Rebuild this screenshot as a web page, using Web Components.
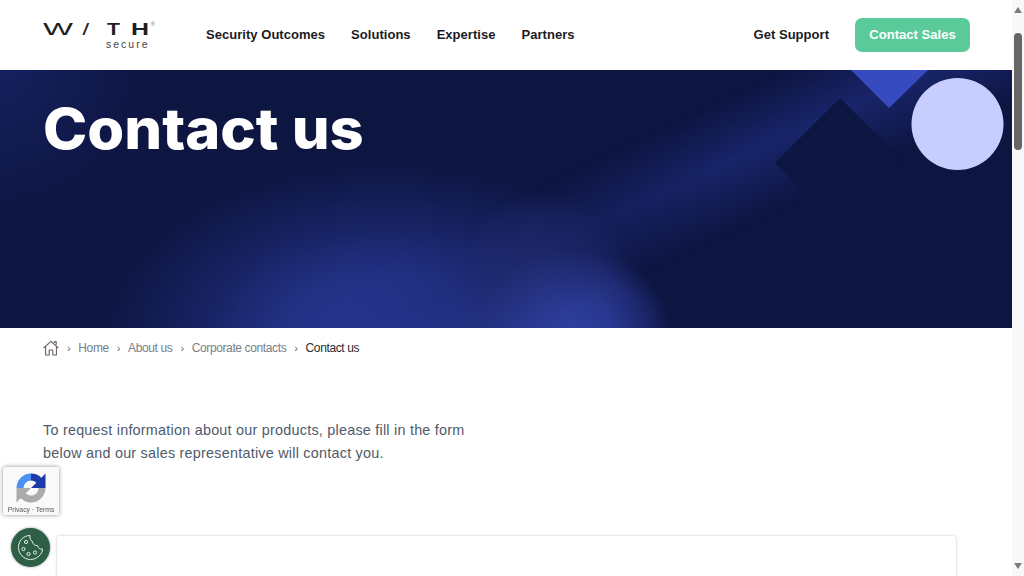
<!DOCTYPE html>
<html>
<head>
<meta charset="utf-8">
<style>
html,body{margin:0;height:100%;overflow:hidden;background:#fff}
body{font-family:"Liberation Sans",Arial,sans-serif}
.page{display:grid;grid-template-columns:1012px 12px;height:576px}
.main{height:576px;overflow:hidden}
</style>
</head>
<body>
<div class="page">
  <div class="main">
    <site-header></site-header>
    <hero-banner>Contact us</hero-banner>
    <bread-crumbs></bread-crumbs>
    <intro-text>To request information about our products, please fill in the form below and our sales representative will contact you.</intro-text>
    <form-card></form-card>
  </div>
  <fake-scrollbar></fake-scrollbar>
</div>
<recaptcha-badge></recaptcha-badge>
<cookie-button></cookie-button>

<script>
class SiteHeader extends HTMLElement {
    constructor() {
        super()
        const shadow = this.attachShadow({ mode: 'open' })
        shadow.innerHTML = `
        <style>
        :host{display:flex;align-items:center;height:70px;box-sizing:border-box;padding:0 42px 0 43px;background:#fff;
            font-family:"Liberation Sans",Arial,sans-serif;box-shadow:0 1px 2px rgba(0,0,0,.15);position:relative}
        .logo{width:113px;height:32px;flex:none;display:block;margin-top:-1px}
        nav{display:flex;gap:26px;margin-left:50px}
        a{font-size:13px;line-height:15px;padding-bottom:2px;font-weight:700;color:#1b1b1f;white-space:nowrap;letter-spacing:.035px}
        .right{margin-left:auto;display:flex;align-items:center;gap:26px}
        .cta{display:flex;align-items:center;justify-content:center;box-sizing:border-box;width:115px;height:34px;border-radius:7px;background:#5bca9b;color:#fff;letter-spacing:.03px}
        </style>
        <svg class="logo" viewBox="0 0 113 32" fill="#1e1e22" font-family="Liberation Sans">
          <text x="0" y="16" font-size="17" textLength="30" lengthAdjust="spacingAndGlyphs">W</text>
          <text x="40" y="16" font-size="17" font-weight="700" font-style="italic">/</text>
          <text x="64" y="16" font-size="17" font-weight="700" textLength="13" lengthAdjust="spacingAndGlyphs">T</text>
          <text x="88" y="16" font-size="17" font-weight="700" textLength="18" lengthAdjust="spacingAndGlyphs">H</text>
          <text x="108" y="7" font-size="5" fill="#666">®</text>
          <text x="63" y="29" font-size="10.5" fill="#444" letter-spacing="2">secure</text>
        </svg>
        <nav><a>Security Outcomes</a><a>Solutions</a><a>Expertise</a><a>Partners</a></nav>
        <div class="right"><a>Get Support</a><a class="cta">Contact Sales</a></div>
        `
    }
}
window.customElements.define('site-header', SiteHeader)

class HeroBanner extends HTMLElement {
    constructor() {
        super()
        const shadow = this.attachShadow({ mode: 'open' })
        shadow.innerHTML = `
        <style>
        :host{display:block;position:relative;height:258px;overflow:hidden;
            background:
              radial-gradient(ellipse 100px 85px at 572px 264px,#2e3f9f 0,rgba(43,59,152,.85) 40%,rgba(42,56,148,.45) 75%,rgba(36,50,130,0) 100%),
              radial-gradient(ellipse 90px 105px at 545px 225px,rgba(46,54,118,.75) 0,rgba(42,50,116,.4) 55%,rgba(38,48,116,0) 100%),
              radial-gradient(ellipse 285px 175px at 385px 266px,#263590 0,#233185 35%,rgba(28,40,112,.7) 65%,rgba(18,28,80,0) 100%),
              radial-gradient(circle 150px at 0 0,#15215e 0,rgba(13,21,65,0) 100%),
              #0d1541}
        .band{position:absolute;inset:0;
            background:linear-gradient(155.3deg,rgba(25,37,100,0) 50%,#19256a 59%,rgba(25,37,100,0) 69%);
            -webkit-mask-image:linear-gradient(90deg,transparent 35%,#000 72%);mask-image:linear-gradient(90deg,transparent 35%,#000 72%)}
        .shapes{position:absolute;inset:0;display:block}
        h1{position:relative;margin:0;padding:24px 0 0 43px;font:800 56px/70px Inter,"Liberation Sans",sans-serif;color:#fff;transform:scaleX(1.065);transform-origin:43px 0}
        </style>
        <div class="band"></div>
        <svg class="shapes" viewBox="0 0 1012 258">
          <polygon points="775,93 840,28 905,93 840,158" fill="#0d1541"/>
          <polygon points="851,0 928,0 889,38" fill="#364bc0"/>
          <circle cx="957.5" cy="54" r="46" fill="#c7cdff"/>
        </svg>
        <h1><slot></slot></h1>
        `
    }
}
window.customElements.define('hero-banner', HeroBanner)

class BreadCrumbs extends HTMLElement {
    constructor() {
        super()
        const shadow = this.attachShadow({ mode: 'open' })
        shadow.innerHTML = `
        <style>
        :host{display:flex;align-items:center;box-sizing:border-box;height:38px;padding:1px 43px 0;font:12px "Liberation Sans",Arial,sans-serif;color:#7a7d88;letter-spacing:-.38px}
        svg{width:16px;height:16px;margin-right:8px;flex:none}
        i{font-style:normal;font-size:11px;margin:0 8px;color:#666}
        i.first{margin-left:0}
        b{font-weight:400;color:#2a2b33}
        </style>
        <svg viewBox="0 0 16 16" fill="none" stroke="#6b5f60" stroke-width="1.1" stroke-linejoin="round">
          <path d="M.6 8 8 1.4 15.4 8M2.6 6.6V15H6.2V10H9.8V15H13.4V6.6M11.4 3V1.6H13.2V4.8"/>
        </svg>
        <i class="first">›</i><span>Home</span><i>›</i><span>About us</span><i>›</i><span>Corporate contacts</span><i>›</i><b>Contact us</b>
        `
    }
}
window.customElements.define('bread-crumbs', BreadCrumbs)

class IntroText extends HTMLElement {
    constructor() {
        super()
        const shadow = this.attachShadow({ mode: 'open' })
        shadow.innerHTML = `
        <style>
        :host{display:block;width:440px;margin:53px 0 0 43px;font:14.4px/23px "Liberation Sans",Arial,sans-serif;color:#4f5a6b;letter-spacing:.23px}
        </style>
        <slot></slot>
        `
    }
}
window.customElements.define('intro-text', IntroText)

class FormCard extends HTMLElement {
    constructor() {
        super()
        const shadow = this.attachShadow({ mode: 'open' })
        shadow.innerHTML = `
        <style>
        :host{display:block;box-sizing:border-box;width:901px;height:200px;margin:70px 0 0 56px;background:#fff;border-radius:4px;border:1px solid #e9e9e9;box-shadow:0 0 3px rgba(0,0,0,.08)}
        </style>
        `
    }
}
window.customElements.define('form-card', FormCard)

class FakeScrollbar extends HTMLElement {
    constructor() {
        super()
        const shadow = this.attachShadow({ mode: 'open' })
        shadow.innerHTML = `
        <style>
        :host{display:flex;flex-direction:column;align-items:center;height:576px;background:#f8f8f8}
        .arrow{width:0;height:0;border-left:4px solid transparent;border-right:4px solid transparent;margin-top:7px;border-bottom:6px solid #7c7c7c}
        .thumb{width:8px;height:117px;margin-top:20px;border-radius:4px;background:#666}
        .down{margin-top:auto;margin-bottom:7px;border-bottom:0;border-top:6px solid #7c7c7c}
        </style>
        <div class="arrow"></div><div class="thumb"></div><div class="arrow down"></div>
        `
    }
}
window.customElements.define('fake-scrollbar', FakeScrollbar)

class RecaptchaBadge extends HTMLElement {
    constructor() {
        super()
        const shadow = this.attachShadow({ mode: 'open' })
        shadow.innerHTML = `
        <style>
        :host{position:fixed;left:3px;top:467px;width:56px;height:48px;background:#f9f9f9;border-radius:2px;box-shadow:0 0 4px rgba(0,0,0,.45);
            display:flex;flex-direction:column;align-items:center;font:6.8px "Liberation Sans",Arial,sans-serif;color:#555}
        svg{width:32px;height:32px;margin-top:5px;display:block}
        span{margin-top:2px;white-space:nowrap}
        </style>
        <svg viewBox="0 0 32 32">
          <path d="M1.5 16H16L10.7 21.3A7.5 7.5 0 0 0 23.5 16H30.5A14.5 14.5 0 0 1 5.7 26.3L1.5 30.5Z" fill="#ababab"/>
          <path d="M16 1.5A14.5 14.5 0 0 0 1.5 16H8.5A7.5 7.5 0 0 1 16 8.5Z" fill="#4a90f5"/>
          <path d="M16 1.5A14.5 14.5 0 0 1 26.3 5.7L30.5 1.5V16H16L21.3 10.7A7.5 7.5 0 0 0 16 8.5Z" fill="#1c3aa9"/>
        </svg>
        <span>Privacy · Terms</span>
        `
    }
}
window.customElements.define('recaptcha-badge', RecaptchaBadge)

class CookieButton extends HTMLElement {
    constructor() {
        super()
        const shadow = this.attachShadow({ mode: 'open' })
        shadow.innerHTML = `
        <style>
        :host{position:fixed;left:11px;top:528px;width:39px;height:39px;border-radius:50%;background:#2c5f45;box-shadow:0 0 3px rgba(0,0,0,.4);display:flex;align-items:center;justify-content:center}
        svg{width:27px;height:27px;display:block}
        </style>
        <svg viewBox="0 0 27 27" fill="none" stroke="#e8efe9" stroke-width="1">
          <path d="M13 1.5C6 1.5 1.5 7 1.5 13.5S7 25.5 13.5 25.5 25.5 20 25.5 15C23 15.5 21 14 20.5 11.5 18 12 15.5 10 15.5 7.5 13.5 7 12.5 4 13 1.5Z"/>
          <circle cx="9" cy="8" r="1.6"/><circle cx="6.5" cy="15" r="1.6"/><circle cx="11.5" cy="20" r="1.6"/><circle cx="18" cy="18.5" r="1.6"/>
        </svg>
        `
    }
}
window.customElements.define('cookie-button', CookieButton)
</script>
</body>
</html>
